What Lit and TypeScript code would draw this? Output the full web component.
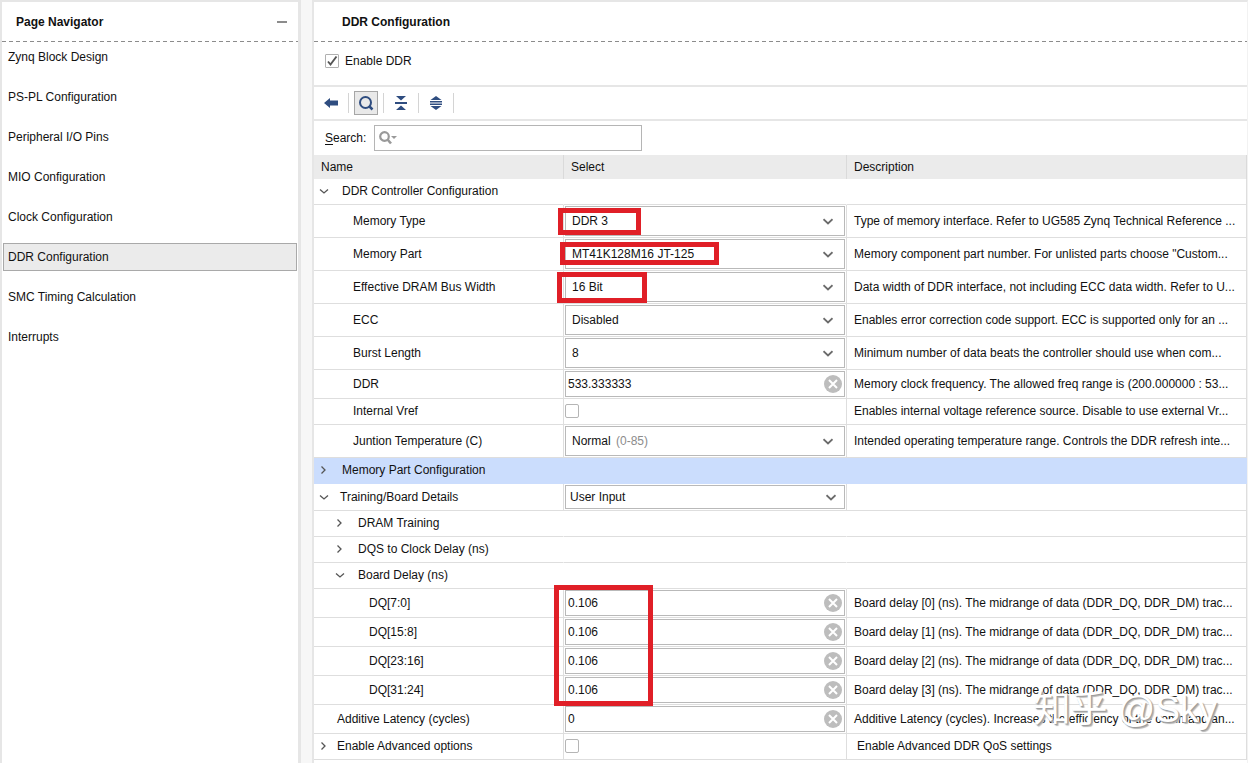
import { LitElement, html, css, svg, nothing } from "lit";
import { customElement, state } from "lit/decorators.js";
import { classMap } from "lit/directives/class-map.js";

type Kind = "select" | "small-select" | "text" | "check" | "none";

interface Row {
  id: string;
  name: string;
  indent: string;
  height: string;
  kind: Kind;
  value?: string;
  note?: string;
  desc?: string;
  twisty?: "open" | "closed";
  mark?: string;
  plain?: boolean;
  selected?: boolean;
  descShift?: boolean;
}

const PAGES = [
  "Zynq Block Design",
  "PS-PL Configuration",
  "Peripheral I/O Pins",
  "MIO Configuration",
  "Clock Configuration",
  "DDR Configuration",
  "SMC Timing Calculation",
  "Interrupts",
];

const dq = (n: number, range: string, mark?: string): Row => ({
  id: `dq${n}`, name: `DQ[${range}]`, indent: "d4", height: "h-text", kind: "text", value: "0.106", mark,
  desc: `Board delay [${n}] (ns). The midrange of data (DDR_DQ, DDR_DM) trac...`,
});

const ROWS: Row[] = [
  { id: "ctrl", name: "DDR Controller Configuration", indent: "d1", height: "h-group", kind: "none", twisty: "open", plain: true },
  { id: "type", name: "Memory Type", indent: "d2", height: "h-select", kind: "select", value: "DDR 3", mark: "mark-type", desc: "Type of memory interface. Refer to UG585 Zynq Technical Reference ..." },
  { id: "part", name: "Memory Part", indent: "d2", height: "h-select", kind: "select", value: "MT41K128M16 JT-125", mark: "mark-part", desc: 'Memory component part number. For unlisted parts choose "Custom...' },
  { id: "width", name: "Effective DRAM Bus Width", indent: "d2", height: "h-select", kind: "select", value: "16 Bit", mark: "mark-width", desc: "Data width of DDR interface, not including ECC data width. Refer to U..." },
  { id: "ecc", name: "ECC", indent: "d2", height: "h-select", kind: "select", value: "Disabled", desc: "Enables error correction code support. ECC is supported only for an ..." },
  { id: "burst", name: "Burst Length", indent: "d2", height: "h-select", kind: "select", value: "8", desc: "Minimum number of data beats the controller should use when com..." },
  { id: "ddr", name: "DDR", indent: "d2", height: "h-text", kind: "text", value: "533.333333", desc: "Memory clock frequency. The allowed freq range is (200.000000 : 53..." },
  { id: "vref", name: "Internal Vref", indent: "d2", height: "h-group", kind: "check", desc: "Enables internal voltage reference source. Disable to use external Vr..." },
  { id: "temp", name: "Juntion Temperature (C)", indent: "d2", height: "h-select", kind: "select", value: "Normal", note: "(0-85)", desc: "Intended operating temperature range. Controls the DDR refresh inte..." },
  { id: "partcfg", name: "Memory Part Configuration", indent: "d1", height: "h-group", kind: "none", twisty: "closed", plain: true, selected: true },
  { id: "training", name: "Training/Board Details", indent: "d1", height: "h-user", kind: "small-select", value: "User Input", twisty: "open" },
  { id: "dram", name: "DRAM Training", indent: "d3", height: "h-group", kind: "none", twisty: "closed", plain: true },
  { id: "dqs", name: "DQS to Clock Delay (ns)", indent: "d3", height: "h-group", kind: "none", twisty: "closed", plain: true },
  { id: "board", name: "Board Delay (ns)", indent: "d3", height: "h-group", kind: "none", twisty: "open", plain: true },
  dq(0, "7:0", "mark-delay"),
  dq(1, "15:8"),
  dq(2, "23:16"),
  dq(3, "31:24"),
  { id: "latency", name: "Additive Latency (cycles)", indent: "d0", height: "h-text", kind: "text", value: "0", desc: "Additive Latency (cycles). Increases the efficiency of the command an..." },
  { id: "adv", name: "Enable Advanced options", indent: "d0", height: "h-group", kind: "check", twisty: "closed", desc: "Enable Advanced DDR QoS settings", descShift: true },
];

const chevronDown = svg`<path d="M0.500 1.200 5 5.500 9.500 1.200" fill="none" stroke="currentColor" stroke-width="1.800"/>`;

@customElement("page-navigator")
export class PageNavigator extends LitElement {
  @state() private current = "DDR Configuration";

  static styles = css`
    :host { display: flex; flex-direction: column; background: #fff; }
    * { box-sizing: border-box; }
    header {
      display: flex; align-items: center; justify-content: space-between;
      height: 40px; padding: 0 11px 0 14px;
      background: repeating-linear-gradient(90deg, #8c8c8c 0 4px, #fff 4px 7px) bottom / 100% 1px no-repeat;
    }
    h2 { margin: 0; font-size: 12px; font-weight: 700; }
    .collapse { width: 10px; height: 10px; padding: 0; border: 0; background: none; display: flex; align-items: center; }
    .collapse::before { content: ""; width: 10px; height: 2px; background: #8c8c8c; }
    nav { display: flex; flex-direction: column; gap: 12px; padding: 1px; }
    a {
      display: flex; align-items: center; height: 28px; padding: 0 4px;
      border: 1px solid transparent; color: #111; text-decoration: none;
    }
    a.current { background: #ebebeb; border-color: #a9a9a9; }
  `;

  render() {
    return html`
      <header><h2>Page Navigator</h2><button class="collapse" aria-label="Collapse"></button></header>
      <nav>
        ${PAGES.map((p) => html`<a href="#" class=${classMap({ current: p === this.current })}
          @click=${(e: Event) => { e.preventDefault(); this.current = p; }}>${p}</a>`)}
      </nav>`;
  }
}

@customElement("config-table")
export class ConfigTable extends LitElement {
  static styles = css`
    :host { display: block; }
    * { box-sizing: border-box; }
    table { width: 100%; table-layout: fixed; border-collapse: separate; border-spacing: 0; }
    .col-name { width: 250px; }
    .col-select { width: 283px; }
    th { height: 24px; padding: 0 7px; background: #ebebeb; border-right: 1px solid #dadada; text-align: left; font-weight: 400; }
    td { padding: 0; border-bottom: 1px solid #dedede; border-right: 1px solid #dedede; vertical-align: middle; white-space: nowrap; }
    .plain td:not(:last-child) { border-right-color: transparent; }
    .selected td, .selected.plain td:not(:last-child) { background: #cbddfd; border-color: #cbddfd; }
    .h-group td { height: 26px; padding-bottom: 2px; }
    .h-user td { height: 27px; }
    .h-text td { height: 29px; }
    .h-select td { height: 33px; }
    .name { display: flex; align-items: center; }
    .twisty { flex: none; width: 10px; height: 10px; padding: 0; border: 0; background: none; color: #555; display: flex; }
    .twisty svg { width: 10px; height: 10px; }
    .d0 { padding-left: 23px; }
    .d1 { padding-left: 28px; }
    .d2 { padding-left: 39px; }
    .d3 { padding-left: 44px; }
    .d4 { padding-left: 55px; }
    .has-twisty { padding-left: 5px; gap: 13px; }
    .has-twisty.d0 { gap: 8px; }
    .has-twisty.d3 { padding-left: 21px; }
    .h-user .has-twisty { gap: 11px; }
    .cell { position: relative; padding: 1px; display: flex; align-items: center; }
    .field { position: relative; flex: 1; display: flex; }
    select, input[type="text"] {
      width: 100%; margin: 0; border: 1px solid #b9b9b9; border-radius: 0; background: #fff;
      font: inherit; color: #111; appearance: none; outline: none;
    }
    select { height: 30px; padding: 0 30px 0 6px; }
    .small select { height: 24px; padding-left: 4px; }
    input[type="text"] { height: 26px; padding: 0 28px 0 2px; }
    .arrow { position: absolute; right: 12px; top: 50%; width: 10px; height: 7px; margin-top: -3px; color: #6b6b6b; pointer-events: none; }
    .small .arrow { right: 9px; }
    .note { position: absolute; left: 51px; top: 0; line-height: 30px; color: #8c8c8c; pointer-events: none; }
    .clear { position: absolute; right: 3px; top: 4px; width: 18px; height: 18px; padding: 0; border: 0; background: none; display: flex; }
    input[type="checkbox"] {
      appearance: none; width: 14px; height: 14px; margin: 0;
      border: 1px solid #b5b5b5; border-radius: 2px; background: #fff;
    }
    .desc { padding: 0 7px; overflow: hidden; }
    .shift { padding-left: 10px; }
    .mark { position: absolute; z-index: 1; border: 5px solid #e01f27; pointer-events: none; }
    .mark-type { left: -6px; top: 3px; width: 83px; height: 27px; }
    .mark-part { left: -4px; top: 4px; width: 159px; height: 23px; }
    .mark-width { left: -7px; top: 1px; width: 90px; height: 31px; }
    .mark-delay { left: -10px; top: -4px; width: 99px; height: 121px; }
  `;

  private control(r: Row) {
    switch (r.kind) {
      case "select":
      case "small-select":
        return html`<div class=${classMap({ field: true, small: r.kind === "small-select" })}>
          <select id=${r.id}><option>${r.value}</option></select>
          ${r.note ? html`<span class="note">${r.note}</span>` : nothing}
          <svg class="arrow" viewBox="0 0 10 7">${chevronDown}</svg>
        </div>`;
      case "text":
        return html`<div class="field">
          <input type="text" id=${r.id} .value=${r.value ?? ""}>
          <button class="clear" aria-label="Clear"><svg width="18" height="18" viewBox="0 0 18 18">
            <circle cx="9" cy="9" r="9" fill="#bdbdbd"/>
            <path d="M5 5 13 13M13 5 5 13" stroke="#fff" stroke-width="2"/></svg></button>
        </div>`;
      case "check":
        return html`<input type="checkbox" id=${r.id}>`;
      default:
        return nothing;
    }
  }

  private twisty(r: Row) {
    if (!r.twisty) return nothing;
    const d = r.twisty === "open" ? "M1 3.500 5 7 9 3.500" : "M2.500 1.500 6 5 2.500 8.500";
    return html`<button class="twisty" aria-label="Toggle ${r.name}">
      <svg viewBox="0 0 10 10"><path d=${d} fill="none" stroke="currentColor" stroke-width="1.300"/></svg></button>`;
  }

  render() {
    return html`<table>
      <colgroup><col class="col-name"><col class="col-select"><col></colgroup>
      <thead><tr><th>Name</th><th>Select</th><th>Description</th></tr></thead>
      <tbody>${ROWS.map((r) => html`
        <tr class=${classMap({ [r.height]: true, plain: !!r.plain, selected: !!r.selected })}>
          <td><div class=${classMap({ name: true, [r.indent]: true, "has-twisty": !!r.twisty })}>
            ${this.twisty(r)}
            ${r.kind === "none" ? html`<span>${r.name}</span>` : html`<label for=${r.id}>${r.name}</label>`}
          </div></td>
          <td>${r.kind === "none" ? nothing : html`<div class="cell">${this.control(r)}
            ${r.mark ? html`<span class="mark ${r.mark}"></span>` : nothing}</div>`}</td>
          <td><div class=${classMap({ desc: true, shift: !!r.descShift })}>${r.desc ?? nothing}</div></td>
        </tr>`)}
      </tbody></table>`;
  }
}

@customElement("app-root")
export class AppRoot extends LitElement {
  static styles = css`
    :host {
      display: grid; grid-template-columns: 301px minmax(0, 1fr); column-gap: 11px;
      min-height: 100vh; box-sizing: border-box; overflow: hidden; background: #f7f7f7;
      font: 12px/16px "Liberation Sans", Arial, sans-serif; color: #111;
    }
    * { box-sizing: border-box; }
    page-navigator { border: 2px solid #e6e6e6; border-right-width: 3px; border-bottom: 0; }
    main { position: relative; background: #fff; border: 2px solid #e6e6e6; border-right: 1px solid #f2f2f2; border-bottom: 0; }
    header {
      display: flex; align-items: center; height: 40px; padding: 0 28px;
      background: repeating-linear-gradient(90deg, #8c8c8c 0 4px, #fff 4px 7px) bottom / 100% 1px no-repeat;
    }
    h1 { margin: 0; font-size: 12px; font-weight: 700; }
    .enable { display: flex; align-items: flex-start; gap: 6px; height: 45px; padding: 11px; border-bottom: 2px solid #e6e6e6; }
    .check { position: relative; display: flex; width: 14px; height: 14px; margin-top: 1px; }
    .check input { appearance: none; width: 14px; height: 14px; margin: 0; border: 1px solid #b0b0b0; border-radius: 1px; background: #fff; }
    .check svg { position: absolute; inset: 0; pointer-events: none; }
    .tools { display: flex; align-items: center; height: 34px; border-bottom: 2px solid #e6e6e6; }
    .slot { display: flex; align-items: center; justify-content: center; width: 35px; height: 20px; border-right: 1px solid #d4d4d4; }
    .tools button { display: flex; align-items: center; justify-content: center; width: 24px; height: 24px; flex: none; padding: 0; border: 1px solid transparent; background: none; }
    .tools button.on { background: #e9e9e9; border-color: #a6a6a6; }
    .search { display: flex; align-items: center; gap: 8px; height: 34px; padding-left: 11px; }
    .search u { text-underline-offset: 2px; }
    .box { position: relative; display: flex; width: 268px; }
    .box input { width: 100%; height: 26px; margin: 0; padding: 0 6px 0 26px; border: 1px solid #b5b5b5; border-radius: 0; font: inherit; outline: none; }
    .box svg { position: absolute; left: 5px; top: 6px; pointer-events: none; }
    .watermark {
      position: absolute; right: 30px; bottom: 26px; z-index: 2; pointer-events: none;
      font: 37px/54px "Liberation Sans", "Noto Sans CJK SC", sans-serif; color: #fff;
      text-shadow: 1px 1px 1px #999, 2px 2px 1px #bbb; white-space: nowrap;
    }
  `;

  render() {
    return html`
      <page-navigator></page-navigator>
      <main>
        <header><h1>DDR Configuration</h1></header>
        <div class="enable">
          <span class="check"><input type="checkbox" id="enable" checked>
            <svg width="14" height="14" viewBox="0 0 14 14"><path d="M3 7.500 5.500 10.500 11.500 2.500" fill="none" stroke="#555" stroke-width="1.900"/></svg></span>
          <label for="enable">Enable DDR</label>
        </div>
        <div class="tools">
          <div class="slot"><button aria-label="Back"><svg width="14" height="12" viewBox="0 0 14 12"><path d="M0 6 6 1V3.500H14V8.500H6V11Z" fill="#2f4d80"/></svg></button></div>
          <div class="slot"><button class="on" aria-label="Search"><svg width="16" height="16" viewBox="0 0 16 16"><circle cx="7.500" cy="7.500" r="5.500" fill="none" stroke="#2f4d80" stroke-width="2"/><path d="M11 11 14.500 14.500" stroke="#2f4d80" stroke-width="2.500"/></svg></button></div>
          <div class="slot"><button aria-label="Collapse all"><svg width="12" height="14" viewBox="0 0 12 14"><path d="M1 0H11L6 4.500ZM0 6H12V8H0ZM6 9.500 11 14H1Z" fill="#2f4d80"/></svg></button></div>
          <div class="slot"><button aria-label="Expand all"><svg width="12" height="14" viewBox="0 0 12 14"><path d="M6 0 11.500 4H0.500ZM0 5H12V6.500H0ZM0 7.500H12V9H0ZM0.500 10H11.500L6 14Z" fill="#2f4d80"/></svg></button></div>
        </div>
        <div class="search">
          <label for="search"><u>S</u>earch:</label>
          <span class="box"><input type="text" id="search">
            <svg width="18" height="14" viewBox="0 0 18 14"><circle cx="5.500" cy="5.500" r="4.300" fill="none" stroke="#999" stroke-width="2.200"/><path d="M8.500 8.500 12 12.500" stroke="#999" stroke-width="2.600"/><path d="M12 5H18L15 8Z" fill="#999"/></svg></span>
        </div>
        <config-table></config-table>
        <div class="watermark">知乎 @Sky</div>
      </main>`;
  }
}
